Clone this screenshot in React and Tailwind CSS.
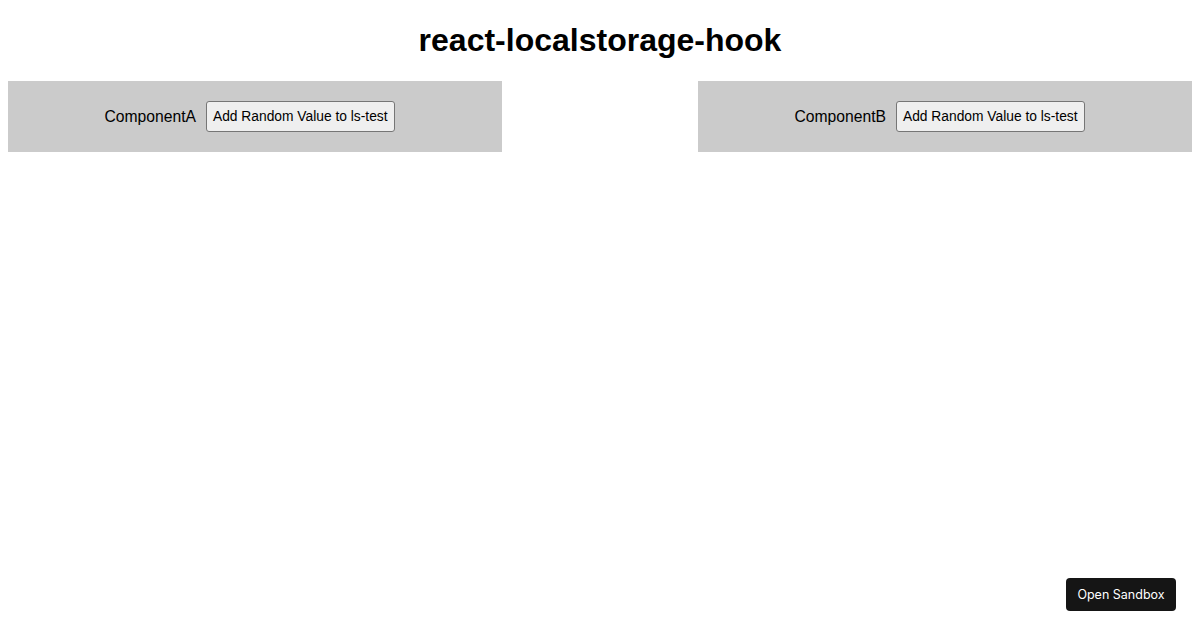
import { useState } from "react";

function Panel({ name }) {
  const [values, setValues] = useState([]);

  const addValue = () => {
    setValues((v) => [...v, Math.random()]);
  };

  return (
    <div className="w-[494px] h-[71px] pr-[11px] bg-[#cbcbcb] flex items-center justify-center gap-[10px]">
      <span className="text-[15.7px] text-black">{name}</span>
      <button
        onClick={addValue}
        className="h-[31px] px-[6px] pt-[1px] text-[13.8px] text-black bg-[#efefef] border border-[#767676] rounded-[3px]"
      >
        Add Random Value to ls-test
      </button>
    </div>
  );
}

export default function App() {
  return (
    <div className="min-h-[630px] bg-white px-2 font-['Liberation_Sans',Arial,sans-serif]">
      <h1 className="pt-[22px] text-[32px] leading-[37px] font-bold text-center text-black">
        react-localstorage-hook
      </h1>

      <div className="mt-[22px] flex justify-between">
        <Panel name="ComponentA" />
        <Panel name="ComponentB" />
      </div>

      {/* sandbox link, pinned to the corner */}
      <button className="fixed right-[24px] bottom-[19px] w-[110px] h-[33px] pt-[2px] rounded-[4px] bg-[#151515] text-white text-[12.5px] font-['Inter',sans-serif]">
        Open Sandbox
      </button>
    </div>
  );
}
